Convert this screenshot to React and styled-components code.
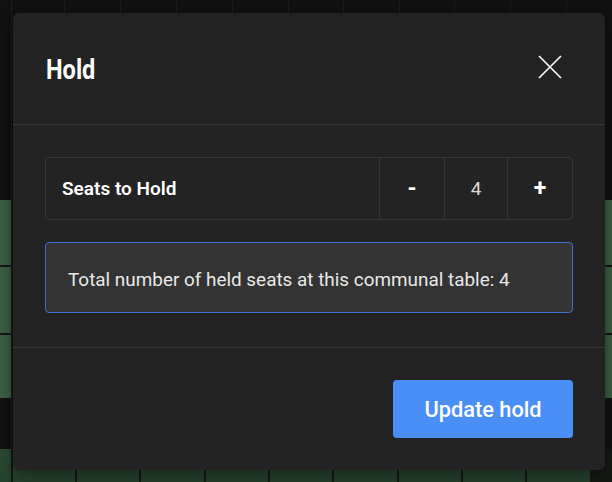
import React from "react";
import styled, { createGlobalStyle } from "styled-components";

const GlobalStyle = createGlobalStyle`
  html, body {
    margin: 0;
    padding: 0;
    background: #121212;
    font-family: Roboto, "Noto Sans", Arial, sans-serif;
    color: #ffffff;
    overflow: hidden;
  }
`;

const Page = styled.div`
  position: relative;
  width: 612px;
  height: 482px;
  overflow: hidden;
`;

/* blurred seating grid behind the modal */
const Backdrop = styled.div`
  display: flex;
  flex-direction: column;
  width: 100%;
  height: 100%;
`;

const DarkBand = styled.div`
  height: ${(p) => p.h}px;
  flex: none;
  display: flex;
  background: #121212;
`;

const DarkCell = styled.div`
  width: ${(p) => p.w}px;
  flex: none;
  border-right: 1px solid #1d1d1d;
`;

const GreenRow = styled.div`
  height: ${(p) => p.h}px;
  flex: none;
  display: flex;
  background: #151a16;
  gap: 2px;
  border-bottom: ${(p) => (p.line ? "2px solid #141814" : "none")};
`;

const GreenCell = styled.div`
  width: ${(p) => p.w}px;
  flex: none;
  background: ${(p) => (p.dim ? "linear-gradient(#2d4e35, #22402a)" : "#3d6246")};
`;

const Overlay = styled.div`
  position: absolute;
  left: 13px;
  top: 13px;
  width: 592px;
  height: 457px;
  background: #232323;
  border-radius: 6px;
  box-shadow: 0 4px 18px rgba(0, 0, 0, 0.5);
  display: flex;
  flex-direction: column;
`;

const Header = styled.div`
  height: 112px;
  display: flex;
  align-items: center;
  justify-content: space-between;
  padding: 0 32px 0 33px;
  box-sizing: border-box;
  border-bottom: 1px solid #3a3a3a;
`;

const Title = styled.h2`
  margin: 0;
  font-size: 28px;
  font-weight: 700;
  transform: scaleX(0.84);
  transform-origin: left center;
  padding-top: 2px;
`;

const CloseButton = styled.button`
  width: 34px;
  height: 34px;
  margin-right: 6px;
  margin-top: -4px;
  background: none;
  border: none;
  padding: 0;
  display: flex;
  align-items: center;
  justify-content: center;
  cursor: pointer;
`;

const Body = styled.div`
  padding: 32px 32px 34px;
  display: flex;
  flex-direction: column;
  gap: 22px;
  border-bottom: 1px solid #3a3a3a;
`;

const Stepper = styled.div`
  height: 63px;
  display: flex;
  border: 1px solid #363636;
  border-radius: 4px;
  box-sizing: border-box;
`;

const StepLabel = styled.div`
  flex: 1;
  display: flex;
  align-items: center;
  padding-left: 16px;
  font-size: 19px;
  font-weight: 600;
`;

const StepCell = styled.div`
  width: ${(p) => p.w}px;
  display: flex;
  align-items: center;
  justify-content: center;
  border-left: 1px solid #363636;
  font-size: ${(p) => (p.bold ? 23 : 19)}px;
  font-weight: ${(p) => (p.bold ? 700 : 400)};
  color: ${(p) => (p.bold ? "#ffffff" : "#dcdcdc")};
`;

const InfoBox = styled.div`
  height: 71px;
  box-sizing: border-box;
  display: flex;
  align-items: center;
  padding: 3px 22px 0;
  background: #333333;
  border: 1px solid #3f6fd8;
  border-radius: 4px;
  font-size: 18.9px;
  color: #e8e8e8;
`;

const Footer = styled.div`
  flex: 1;
  display: flex;
  justify-content: flex-end;
  align-items: flex-start;
  padding: 32px 32px 0;
`;

const PrimaryButton = styled.button`
  width: 180px;
  height: 58px;
  border: none;
  border-radius: 4px;
  background: #4a8ff5;
  color: #ffffff;
  font-family: Roboto, "Noto Sans", Arial, sans-serif;
  font-size: 21.8px;
  font-weight: 500;
  cursor: pointer;
`;

const topCols = [11, 52, 55, 55, 55, 55, 54, 55, 54, 55, 55, 56];
const midCols = [11, 570, 27];
const lowCols = [11, 62, 62, 63, 62, 62, 63, 62, 62, 63];

export default function App() {
  return (
    <Page>
      <GlobalStyle />
      <Backdrop>
        <DarkBand h={200}>
          {topCols.map((w, i) => (
            <DarkCell key={i} w={w} />
          ))}
        </DarkBand>
        <GreenRow h={65} line>
          {midCols.map((w, i) => (
            <GreenCell key={i} w={w} />
          ))}
        </GreenRow>
        <GreenRow h={66} line>
          {midCols.map((w, i) => (
            <GreenCell key={i} w={w} />
          ))}
        </GreenRow>
        <GreenRow h={63}>
          {midCols.map((w, i) => (
            <GreenCell key={i} w={w} />
          ))}
        </GreenRow>
        <DarkBand h={51}>
          {topCols.map((w, i) => (
            <DarkCell key={i} w={w} />
          ))}
        </DarkBand>
        <GreenRow h={40}>
          {lowCols.map((w, i) => (
            <GreenCell key={i} w={w} dim />
          ))}
        </GreenRow>
      </Backdrop>

      <Overlay role="dialog">
        <Header>
          <Title>Hold</Title>
          <CloseButton aria-label="Close">
            <svg width="24" height="24" viewBox="0 0 24 24">
              <path d="M1 1 L23 23 M23 1 L1 23" stroke="#ffffff" strokeWidth="1.6" fill="none" />
            </svg>
          </CloseButton>
        </Header>
        <Body>
          <Stepper>
            <StepLabel>Seats to Hold</StepLabel>
            <StepCell w={64} bold>-</StepCell>
            <StepCell w={62}>4</StepCell>
            <StepCell w={64} bold>+</StepCell>
          </Stepper>
          <InfoBox>Total number of held seats at this communal table: 4</InfoBox>
        </Body>
        <Footer>
          <PrimaryButton>Update hold</PrimaryButton>
        </Footer>
      </Overlay>
    </Page>
  );
}
